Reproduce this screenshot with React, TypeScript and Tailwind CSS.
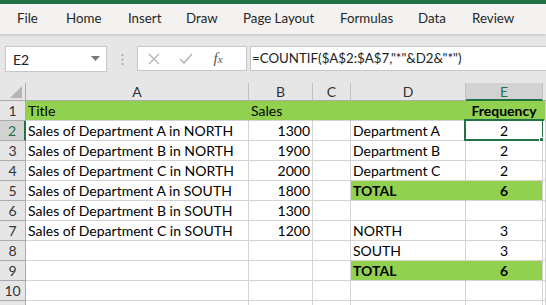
import React from "react";

const cellFont = { fontFamily: "Lato, 'Open Sans', sans-serif" };

type Cell = { t?: string; align?: "l" | "r" | "c"; bold?: boolean; green?: boolean };

const rows: Cell[][] = [
  [{ t: "Title", green: true }, { t: "Sales", green: true }, { green: true }, { green: true }, { t: "Frequency", align: "c", bold: true, green: true }, { green: true }],
  [{ t: "Sales of Department A in NORTH" }, { t: "1300", align: "r" }, {}, { t: "Department A" }, { t: "2", align: "c" }, {}],
  [{ t: "Sales of Department B in NORTH" }, { t: "1900", align: "r" }, {}, { t: "Department B" }, { t: "2", align: "c" }, {}],
  [{ t: "Sales of Department C in NORTH" }, { t: "2000", align: "r" }, {}, { t: "Department C" }, { t: "2", align: "c" }, {}],
  [{ t: "Sales of Department A in SOUTH" }, { t: "1800", align: "r" }, {}, { t: "TOTAL", bold: true, green: true }, { t: "6", align: "c", bold: true, green: true }, {}],
  [{ t: "Sales of Department B in SOUTH" }, { t: "1300", align: "r" }, {}, {}, {}, {}],
  [{ t: "Sales of Department C in SOUTH" }, { t: "1200", align: "r" }, {}, { t: "NORTH" }, { t: "3", align: "c" }, {}],
  [{}, {}, {}, { t: "SOUTH" }, { t: "3", align: "c" }, {}],
  [{}, {}, {}, { t: "TOTAL", bold: true, green: true }, { t: "6", align: "c", bold: true, green: true }, {}],
  [{}, {}, {}, {}, {}, {}],
  [{}, {}, {}, {}, {}, {}],
];

const menu: [string, number][] = [
  ["File", 49],
  ["Home", 62],
  ["Insert", 58],
  ["Draw", 57],
  ["Page Layout", 97],
  ["Formulas", 78],
  ["Data", 54],
  ["Review", 60],
];

export default function App() {
  return (
    <div className="w-[546px] h-[305px] overflow-hidden bg-white flex flex-col">
      <div className="h-[4px] bg-[#217346] shrink-0" />
      <div
        className="h-[30px] shrink-0 bg-[#f3f2f1] flex items-center pl-[17px] text-[13.3px] text-[#262626] shadow-[0_1px_3px_rgba(0,0,0,0.18)] relative z-10"
        style={{ fontFamily: "Lato, 'Open Sans', sans-serif" }}
      >
        {menu.map(([m, w]) => (
          <div key={m} className="shrink-0 whitespace-nowrap" style={{ width: w }}>
            {m}
          </div>
        ))}
      </div>
      <div className="h-[49px] shrink-0 bg-[#e6e6e6] flex items-start pt-[12px] pl-[5px]">
        <div
          className="w-[102px] h-[26px] bg-white border border-[#c6c6c6] flex items-center pl-[7px] pr-[6px] text-[14px] text-[#222]"
          style={cellFont}
        >
          <span className="flex-1">E2</span>
          <svg width="9" height="6" viewBox="0 0 9 6">
            <path d="M0 0 L9 0 L4.5 5 Z" fill="#777" />
          </svg>
        </div>
        <div className="w-[30px] h-[26px] flex items-center justify-center">
          <svg width="3" height="11" viewBox="0 0 3 11">
            <rect x="0.5" y="0" width="2" height="2" fill="#b0b0b0" />
            <rect x="0.5" y="4.5" width="2" height="2" fill="#b0b0b0" />
            <rect x="0.5" y="9" width="2" height="2" fill="#b0b0b0" />
          </svg>
        </div>
        <div className="w-[110px] h-[25px] bg-white border border-[#c6c6c6] flex items-center">
          <div className="w-[30px] flex justify-center ml-[1px]">
            <svg width="12" height="12" viewBox="0 0 12 12">
              <path d="M1 1 L11 11 M11 1 L1 11" stroke="#b5b5b5" strokeWidth="1.4" fill="none" />
            </svg>
          </div>
          <div className="w-[34px] flex justify-center">
            <svg width="14" height="11" viewBox="0 0 14 11">
              <path d="M1 6 L5 10 L13 1" stroke="#b5b5b5" strokeWidth="1.6" fill="none" />
            </svg>
          </div>
          <div
            className="w-[30px] flex justify-center text-[15px] italic text-[#555]"
            style={{ fontFamily: "'Liberation Serif', serif" }}
          >
            <span>f<span className="text-[11px]">x</span></span>
          </div>
        </div>
        <div
          className="ml-[3px] flex-1 h-[25px] bg-white border border-[#c6c6c6] border-r-0 flex items-center pl-[1px] text-[13.3px] text-[#222] whitespace-nowrap"
          style={cellFont}
        >
          =COUNTIF($A$2:$A$7,"*"&amp;D2&amp;"*")
        </div>
      </div>
      <div
        className="grid grid-cols-[26px_223px_64px_38px_115px_77px_1fr] grid-rows-[18px_repeat(11,20px)] text-[14px] text-black"
        style={cellFont}
      >
        <div className="bg-[#e6e6e6] border-r border-b border-[#ababab] relative">
          <svg className="absolute left-[10px] top-[3px]" width="12" height="12" viewBox="0 0 12 12">
            <path d="M12 0 L12 12 L0 12 Z" fill="#b4b4b4" />
          </svg>
        </div>
        {["A", "B", "C", "D"].map((c) => (
          <div
            key={c}
            className="bg-[#e6e6e6] border-r border-b border-[#c0c0c0] border-b-[#ababab] flex items-center justify-center text-[14px] text-[#333]"
          >
            {c}
          </div>
        ))}
        <div className="bg-[#d2d2d2] border-r border-[#c0c0c0] border-b-2 border-b-[#217346] flex items-center justify-center text-[14px] text-[#217346]">
          E
        </div>
        <div className="bg-[#e6e6e6] border-b border-[#ababab]" />
        {rows.map((r, ri) => (
          <React.Fragment key={ri}>
            <div
              className={
                ri === 1
                  ? "bg-[#d2d2d2] border-b border-[#ababab] border-r-2 border-r-[#217346] flex items-center justify-center text-[14px] text-[#217346]"
                  : "bg-[#e6e6e6] border-r border-b border-[#ababab] flex items-center justify-center text-[14px] text-[#333]"
              }
            >
              {ri < 10 ? ri + 1 : ""}
            </div>
            {r.map((c, ci) => {
              const align = c.align === "r" ? "justify-end pr-[2px]" : c.align === "c" ? "justify-center" : "justify-start pl-[2px]";
              const next = r[ci + 1];
              const rightGreen = c.green && next && next.green;
              const below = rows[ri + 1] && rows[ri + 1][ci];
              const bottomGreen = c.green && below && below.green;
              return (
                <div
                  key={ci}
                  className={
                    "flex items-center whitespace-nowrap overflow-visible relative border-r border-b " +
                    align +
                    " " +
                    (c.green ? "bg-[#92d050] " : "bg-white ") +
                    (rightGreen ? "border-r-[#92d050] " : "border-r-[#d4d4d4] ") +
                    (bottomGreen ? "border-b-[#92d050] " : "border-b-[#d4d4d4] ") +
                    (c.bold ? "font-bold" : "")
                  }
                >
                  {c.t}
                  {ri === 1 && ci === 4 && (
                    <>
                      <div className="absolute -left-[2px] -top-[2px] right-[-2px] bottom-[-1px] border-2 border-[#217346] pointer-events-none" />
                      <div className="absolute right-[-4px] bottom-[-4px] w-[7px] h-[7px] bg-[#217346] border border-white" />
                    </>
                  )}
                </div>
              );
            })}
          </React.Fragment>
        ))}
      </div>
    </div>
  );
}
